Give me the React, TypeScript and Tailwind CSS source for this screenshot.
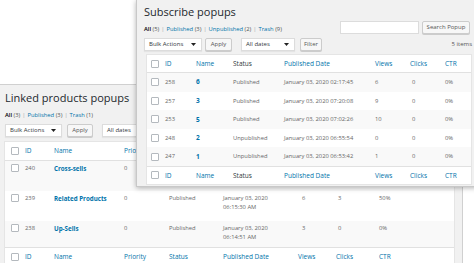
import React from "react";

const font = "font-['Open_Sans','Noto_Sans',sans-serif]";

type SubRow = {
  id: string;
  name: string;
  status: string;
  date: string;
  views: string;
  clicks: string;
  ctr: string;
};

const subscribeRows: SubRow[] = [
  { id: "258", name: "6", status: "Published", date: "January 03, 2020 02:17:45", views: "6", clicks: "0", ctr: "0%" },
  { id: "257", name: "3", status: "Published", date: "January 03, 2020 07:20:08", views: "9", clicks: "0", ctr: "0%" },
  { id: "253", name: "5", status: "Published", date: "January 03, 2020 07:02:26", views: "10", clicks: "0", ctr: "0%" },
  { id: "248", name: "2", status: "Unpublished", date: "January 03, 2020 06:55:54", views: "0", clicks: "0", ctr: "0%" },
  { id: "247", name: "1", status: "Unpublished", date: "January 03, 2020 06:53:42", views: "1", clicks: "0", ctr: "0%" },
];

type LinkedRow = {
  id: string;
  name: string;
  priority: string;
  status: string;
  day: string;
  time: string;
  views: string;
  clicks: string;
  ctr: string;
  h: string;
  covered?: boolean;
};

// first row sits under the subscribe window, so its right-hand cells stay hidden
const linkedRows: LinkedRow[] = [
  { id: "240", name: "Cross-sells", priority: "0", status: "Published", day: "January 03, 2020", time: "06:16:12 AM", views: "4", clicks: "1", ctr: "25%", h: "h-[30px]", covered: true },
  { id: "239", name: "Related Products", priority: "0", status: "Published", day: "January 03, 2020", time: "06:15:30 AM", views: "6", clicks: "3", ctr: "50%", h: "h-[30px]" },
  { id: "238", name: "Up-Sells", priority: "0", status: "Published", day: "January 03, 2020", time: "06:14:51 AM", views: "3", clicks: "0", ctr: "0%", h: "h-[26px]" },
];

const Checkbox = () => (
  <span className="block w-[8px] h-[8px] bg-white border border-[#b4b9be] rounded-[1px]" />
);

const Caret = () => (
  <svg width="5" height="3" viewBox="0 0 5 3" className="shrink-0">
    <path d="M0 0h5L2.5 3z" fill="#222" />
  </svg>
);

const SelectBox: React.FC<{ label: string; className: string }> = ({ label, className }) => (
  <div
    className={`flex items-center justify-between h-full bg-white border border-[#dcdcdc] shadow-[0_1px_1px_rgba(0,0,0,0.05)] pl-[4px] pr-[5px] text-[6px] text-[#32373c] ${className}`}
  >
    <span>{label}</span>
    <Caret />
  </div>
);

const Btn: React.FC<{ label: string; className: string }> = ({ label, className }) => (
  <div
    className={`flex items-center justify-center h-full bg-[#f7f7f7] border border-[#cccccc] rounded-[2px] shadow-[0_1px_0_#cccccc] text-[6px] text-[#555] ${className}`}
  >
    {label}
  </div>
);

const Sep = () => <span className="text-[#a0a5aa] px-[2px]">|</span>;

const SubscribeWindow = () => {
  const header = (
    <div className="grid grid-cols-[18px_31px_37px_51px_91px_35px_35px_1fr] items-center h-[17px] bg-white text-[6.5px] text-[#0073aa]">
      <div className="pl-[4px]">
        <Checkbox />
      </div>
      <div>ID</div>
      <div>Name</div>
      <div className="text-[#32373c]">Status</div>
      <div>Published Date</div>
      <div>Views</div>
      <div>Clicks</div>
      <div>CTR</div>
    </div>
  );
  return (
    <div
      className={`absolute left-[136px] top-0 w-[342px] h-[187px] bg-[#f1f1f1] border-l border-b border-[#c8c8c8] shadow-[0_1px_5px_rgba(0,0,0,0.3)] pl-[7px] pr-[8px] ${font}`}
    >
      <div className="flex items-start justify-between">
        <div className="pt-[3px]">
          <h1 className="text-[11px] leading-[18px] text-[#23282d]">Subscribe popups</h1>
          <div className="mt-[4px] text-[5.8px] leading-[8px] text-[#555] whitespace-nowrap">
            <span className="font-semibold text-black">All</span> (5)
            <Sep />
            <span className="text-[#0073aa]">Published</span> (3)
            <Sep />
            <span className="text-[#0073aa]">Unpublished</span> (2)
            <Sep />
            <span className="text-[#0073aa]">Trash</span> (9)
          </div>
        </div>
        <div className="flex h-[13px] mt-[21px] gap-[3px]">
          <div className="w-[79px] h-full bg-white border border-[#dcdcdc]" />
          <Btn label="Search Popup" className="w-[48px]" />
        </div>
      </div>
      <div className="flex items-center h-[13px] mt-[4px]">
        <SelectBox label="Bulk Actions" className="w-[58px]" />
        <Btn label="Apply" className="w-[27px] ml-[3px]" />
        <SelectBox label="All dates" className="w-[54px] ml-[9px]" />
        <Btn label="Filter" className="w-[22px] ml-[5px]" />
        <span className="ml-auto -mr-[2px] text-[6px] text-[#555]">5 items</span>
      </div>
      <div className="mt-[3px] ml-[2px] w-[326px] border border-[#e5e5e5] bg-white">
        <div className="border-b border-[#e1e1e1]">{header}</div>
        {subscribeRows.map((r, i) => (
          <div
            key={r.id}
            className={`grid grid-cols-[18px_31px_37px_51px_91px_35px_35px_1fr] items-center h-[18.6px] text-[5.8px] text-[#666] ${
              i % 2 === 0 ? "bg-[#f9f9f9]" : "bg-white"
            }`}
          >
            <div className="pl-[4px]">
              <Checkbox />
            </div>
            <div>{r.id}</div>
            <div className="font-bold text-[6.5px] text-[#0073aa]">{r.name}</div>
            <div>{r.status}</div>
            <div>{r.date}</div>
            <div>{r.views}</div>
            <div className="pl-[2px]">{r.clicks}</div>
            <div>{r.ctr}</div>
          </div>
        ))}
        <div className="border-t border-[#e1e1e1]">{header}</div>
      </div>
    </div>
  );
};

const LinkedHeader: React.FC<{ covered?: boolean }> = ({ covered }) => {
  const hid = covered ? "invisible" : "";
  return (
    <div className="grid grid-cols-[20px_29px_70px_45px_54px_75px_38px_43px_1fr] items-center h-[18px] bg-white text-[6.5px] text-[#0073aa]">
      <div className="pl-[6px]">
        <Checkbox />
      </div>
      <div>ID</div>
      <div>Name</div>
      <div>Priority</div>
      <div className={hid}>Status</div>
      <div className={hid}>Published Date</div>
      <div className={hid}>Views</div>
      <div className={hid}>Clicks</div>
      <div className={hid}>CTR</div>
    </div>
  );
};

const LinkedWindow = () => (
  <div
    className={`absolute left-0 top-[84px] w-[463px] h-[190px] bg-[#f1f1f1] border-t border-r border-[#d0d0d0] pl-[5px] ${font}`}
  >
    <div className="pt-[3px]">
      <h1 className="text-[11px] leading-[19px] text-[#23282d]">Linked products popups</h1>
      <div className="mt-[4px] text-[5.8px] leading-[8px] text-[#555] whitespace-nowrap">
        <span className="font-semibold text-black">All</span> (3)
        <Sep />
        <span className="text-[#0073aa]">Published</span> (3)
        <Sep />
        <span className="text-[#0073aa]">Trash</span> (1)
      </div>
    </div>
    <div className="flex items-center h-[13px] mt-[5px]">
      <SelectBox label="Bulk Actions" className="w-[57px]" />
      <Btn label="Apply" className="w-[26px] ml-[5px]" />
      <SelectBox label="All dates" className="w-[56px] ml-[9px]" />
    </div>
    <div className="mt-[4px] -ml-[1px] w-[451px] border border-[#e5e5e5] bg-white">
      <div className="border-b border-[#e1e1e1]">
        <LinkedHeader covered />
      </div>
      {linkedRows.map((r, i) => {
        const hid = r.covered ? "invisible" : "";
        return (
          <div
            key={r.id}
            className={`grid grid-cols-[20px_29px_70px_45px_54px_75px_38px_43px_1fr] items-start ${r.h} pt-[2.5px] text-[5.8px] leading-[9px] text-[#666] ${
              i % 2 === 0 ? "bg-[#f9f9f9]" : "bg-white"
            }`}
          >
            <div className="pl-[6px] pt-[0.5px]">
              <Checkbox />
            </div>
            <div>{r.id}</div>
            <div className="font-bold text-[6.2px] text-[#0073aa]">{r.name}</div>
            <div>{r.priority}</div>
            <div className={hid}>{r.status}</div>
            <div className={hid}>
              <div>{r.day}</div>
              <div>{r.time}</div>
            </div>
            <div className={`pl-[4px] ${hid}`}>{r.views}</div>
            <div className={`pl-[2px] ${hid}`}>{r.clicks}</div>
            <div className={hid}>{r.ctr}</div>
          </div>
        );
      })}
      <div className="border-t border-[#e1e1e1]">
        <LinkedHeader />
      </div>
    </div>
  </div>
);

export default function App() {
  return (
    <div className="relative w-[474px] h-[263px] overflow-hidden bg-white">
      <LinkedWindow />
      <SubscribeWindow />
    </div>
  );
}
